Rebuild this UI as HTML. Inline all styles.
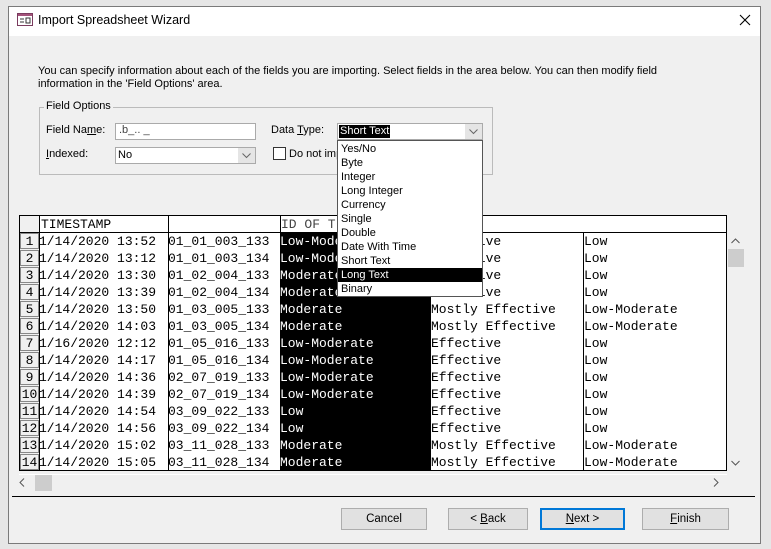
<!DOCTYPE html>
<html><head><meta charset="utf-8"><style>
*{margin:0;padding:0;box-sizing:border-box}
body{width:771px;height:549px;background:#e6e6e6;position:relative;overflow:hidden;font-family:"Liberation Sans",Arial,sans-serif;font-size:11px;color:#000}
.a{position:absolute}
.win{left:8px;top:6px;width:753px;height:538px;background:#f0f0f0;border:1px solid #7a7a7a}
.title{left:9px;top:7px;width:751px;height:29px;background:#fff}
.mono{font-family:"Liberation Mono","Courier New",monospace;font-size:13px;white-space:pre}
.btn{background:#e1e1e1;border:1px solid #adadad;text-align:center;line-height:20px;font-size:11.5px}
.dd div{height:14px;line-height:14px;padding-left:3px}
.cell{position:absolute;height:17px;line-height:17px}
.rn{position:absolute;left:20px;width:19px;height:16px;background:#f0f0f0;border:1px solid #888;text-align:center;line-height:15px;font-family:"Liberation Mono",monospace;font-size:13px}
</style></head><body>
<div class="a win"></div>
<div class="a title"></div>
<svg class="a" style="left:17px;top:13px" width="16" height="14"><rect x="0.5" y="0.5" width="15" height="12" fill="#fff" stroke="#7a3b5e"/><rect x="1" y="1" width="14" height="2" fill="#a3527a"/><line x1="3" y1="6" x2="7" y2="6" stroke="#333"/><line x1="3" y1="9" x2="7" y2="9" stroke="#333"/><rect x="9" y="5" width="4" height="5" fill="none" stroke="#333"/></svg>
<div class="a" style="left:38px;top:13px;font-size:12.5px">Import Spreadsheet Wizard</div>
<svg class="a" style="left:739px;top:14px" width="12" height="12"><path d="M1 1L11 11M11 1L1 11" stroke="#000" stroke-width="1.1"/></svg>

<div class="a" style="left:38px;top:65px;line-height:13px;width:700px">You can specify information about each of the fields you are importing. Select fields in the area below. You can then modify field<br>information in the 'Field Options' area.</div>

<div class="a" style="left:39px;top:107px;width:454px;height:68px;border:1px solid #bbb"></div>
<div class="a" style="left:44px;top:100px;background:#f0f0f0;padding:0 2px">Field Options</div>
<div class="a" style="left:46px;top:124px">Field Na<u>m</u>e:</div>
<div class="a" style="left:115px;top:123px;width:141px;height:17px;background:#fff;border:1px solid #aaa;font-size:11px;padding-left:3px;color:#444">.b_.. _</div>
<div class="a" style="left:46px;top:148px"><u>I</u>ndexed:</div>
<div class="a" style="left:115px;top:147px;width:141px;height:17px;background:#fff;border:1px solid #aaa;padding-left:2px;line-height:15px">No</div>
<div class="a" style="left:238px;top:148px;width:17px;height:15px;background:#e5e5e5"></div>
<svg class="a" style="left:242px;top:153px" width="9" height="6"><path d="M0.5 0.5L4.5 4.5L8.5 0.5" fill="none" stroke="#666"/></svg>
<div class="a" style="left:271px;top:124px">Data <u>T</u>ype:</div>
<div class="a" style="left:337px;top:123px;width:146px;height:17px;background:#fff;border:1px solid #aaa"></div>
<div class="a" style="left:339px;top:125px;background:#000;color:#fff;padding:0 1px;line-height:13px">Short Text</div>
<div class="a" style="left:465px;top:124px;width:17px;height:15px;background:#e5e5e5"></div>
<svg class="a" style="left:469px;top:129px" width="9" height="6"><path d="M0.5 0.5L4.5 4.5L8.5 0.5" fill="none" stroke="#666"/></svg>
<div class="a" style="left:273px;top:147px;width:13px;height:13px;border:1px solid #333;background:#fff"></div>
<div class="a" style="left:289px;top:148px">Do not imp</div>

<!-- grid -->
<div class="a" style="left:19px;top:215px;width:708px;height:256px;background:#fff;border:1px solid #000"></div>
<div class="a" style="left:20px;top:216px;width:19px;height:254px;background:#f0f0f0"></div>
<div class="a" style="left:280px;top:232px;width:151px;height:238px;background:#000"></div>
<div class="a" style="left:20px;top:232px;width:706px;height:1px;background:#000"></div>
<div class="a" style="left:39px;top:216px;width:1px;height:254px;background:#000"></div>
<div class="a" style="left:168px;top:216px;width:1px;height:254px;background:#000"></div>
<div class="a" style="left:280px;top:216px;width:1px;height:16px;background:#000"></div>
<div class="a" style="left:430px;top:216px;width:1px;height:16px;background:#000"></div>
<div class="a" style="left:430px;top:232px;width:1px;height:238px;background:#000"></div>
<div class="a" style="left:583px;top:233px;width:1px;height:237px;background:#000"></div>
<div class="a mono" style="left:41px;top:216px;line-height:17px">TIMESTAMP</div>
<div class="a mono" style="left:281px;top:216px;line-height:17px;color:#444">ID OF T</div>
<div id="rows"></div>
<script>
var d=[["1/14/2020 13:52","01_01_003_133","Low-Moderate","Effective","Low"],["1/14/2020 13:12","01_01_003_134","Low-Moderate","Effective","Low"],["1/14/2020 13:30","01_02_004_133","Moderate","Effective","Low"],["1/14/2020 13:39","01_02_004_134","Moderate","Effective","Low"],["1/14/2020 13:50","01_03_005_133","Moderate","Mostly Effective","Low-Moderate"],["1/14/2020 14:03","01_03_005_134","Moderate","Mostly Effective","Low-Moderate"],["1/16/2020 12:12","01_05_016_133","Low-Moderate","Effective","Low"],["1/14/2020 14:17","01_05_016_134","Low-Moderate","Effective","Low"],["1/14/2020 14:36","02_07_019_133","Low-Moderate","Effective","Low"],["1/14/2020 14:39","02_07_019_134","Low-Moderate","Effective","Low"],["1/14/2020 14:54","03_09_022_133","Low","Effective","Low"],["1/14/2020 14:56","03_09_022_134","Low","Effective","Low"],["1/14/2020 15:02","03_11_028_133","Moderate","Mostly Effective","Low-Moderate"],["1/14/2020 15:05","03_11_028_134","Moderate","Mostly Effective","Low-Moderate"]];
var h="",x=[39,168,280,431,584];
for(var i=0;i<14;i++){var y=233+i*17;h+='<div class="rn" style="top:'+y+'px">'+(i+1)+'</div>';
for(var j=0;j<5;j++)h+='<div class="cell mono" style="left:'+x[j]+'px;top:'+y+'px;'+(j==2?'color:#fff':'')+'">'+d[i][j]+'</div>';}
document.getElementById('rows').innerHTML=h;
</script>

<!-- dropdown list -->
<div class="a dd" style="left:337px;top:140px;width:146px;height:157px;background:#fff;border:1px solid #555;padding-top:1px">
<div>Yes/No</div><div>Byte</div><div>Integer</div><div>Long Integer</div><div>Currency</div><div>Single</div><div>Double</div><div>Date With Time</div><div>Short Text</div><div style="background:#000;color:#fff">Long Text</div><div>Binary</div></div>

<!-- scrollbars -->
<svg class="a" style="left:731px;top:238px" width="9" height="6"><path d="M0.5 5L4.5 1L8.5 5" fill="none" stroke="#555"/></svg>
<div class="a" style="left:728px;top:249px;width:16px;height:18px;background:#cdcdcd"></div>
<svg class="a" style="left:731px;top:460px" width="9" height="6"><path d="M0.5 1L4.5 5L8.5 1" fill="none" stroke="#555"/></svg>
<div class="a" style="left:19px;top:474px;width:708px;height:1px;background:#fff"></div>
<svg class="a" style="left:19px;top:478px" width="6" height="9"><path d="M5 0.5L1 4.5L5 8.5" fill="none" stroke="#555"/></svg>
<div class="a" style="left:35px;top:475px;width:17px;height:16px;background:#cdcdcd"></div>
<svg class="a" style="left:713px;top:478px" width="6" height="9"><path d="M1 0.5L5 4.5L1 8.5" fill="none" stroke="#555"/></svg>

<div class="a" style="left:12px;top:496px;width:743px;height:1px;background:#000"></div>
<div class="a btn" style="left:341px;top:508px;width:86px;height:22px">Cancel</div>
<div class="a btn" style="left:448px;top:508px;width:80px;height:22px">&lt; <u>B</u>ack</div>
<div class="a btn" style="left:540px;top:508px;width:85px;height:22px;border:2px solid #0078d7;line-height:18px"><u>N</u>ext &gt;</div>
<div class="a btn" style="left:642px;top:508px;width:87px;height:22px"><u>F</u>inish</div>
</body></html>
